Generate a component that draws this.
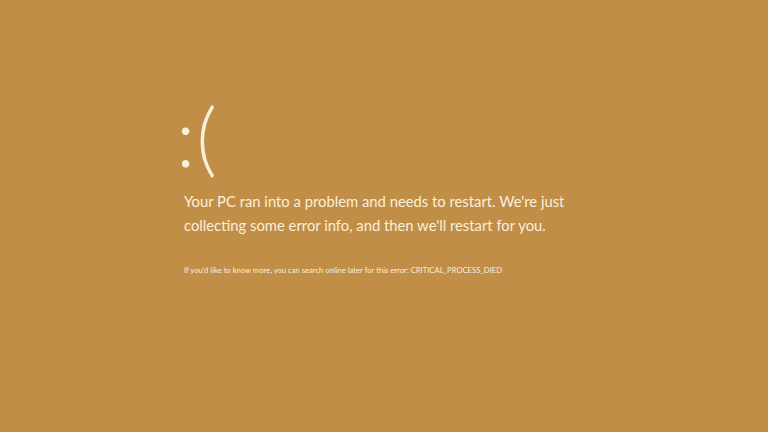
export default function App() {
  return (
    <div className="w-[768px] h-[432px] overflow-hidden bg-[#c18e48] text-[#fbeedb]" style={{ fontFamily: 'Lato, "Open Sans", sans-serif' }}>
      <div className="pl-[184px] pt-[88px]">
        <div className="text-[80px] leading-[96px] font-light -ml-[8px] tracking-[1px]">:(</div>
        <p className="mt-[5px] text-[14.8px] leading-[24px]">
          Your PC ran into a problem and needs to restart. We're just
          <br />
          collecting some error info, and then we'll restart for you.
        </p>
        <p className="mt-[28px] text-[7.65px] leading-[10px]">
          If you'd like to know more, you can search online later for this error: CRITICAL_PROCESS_DIED
        </p>
      </div>
    </div>
  );
}
